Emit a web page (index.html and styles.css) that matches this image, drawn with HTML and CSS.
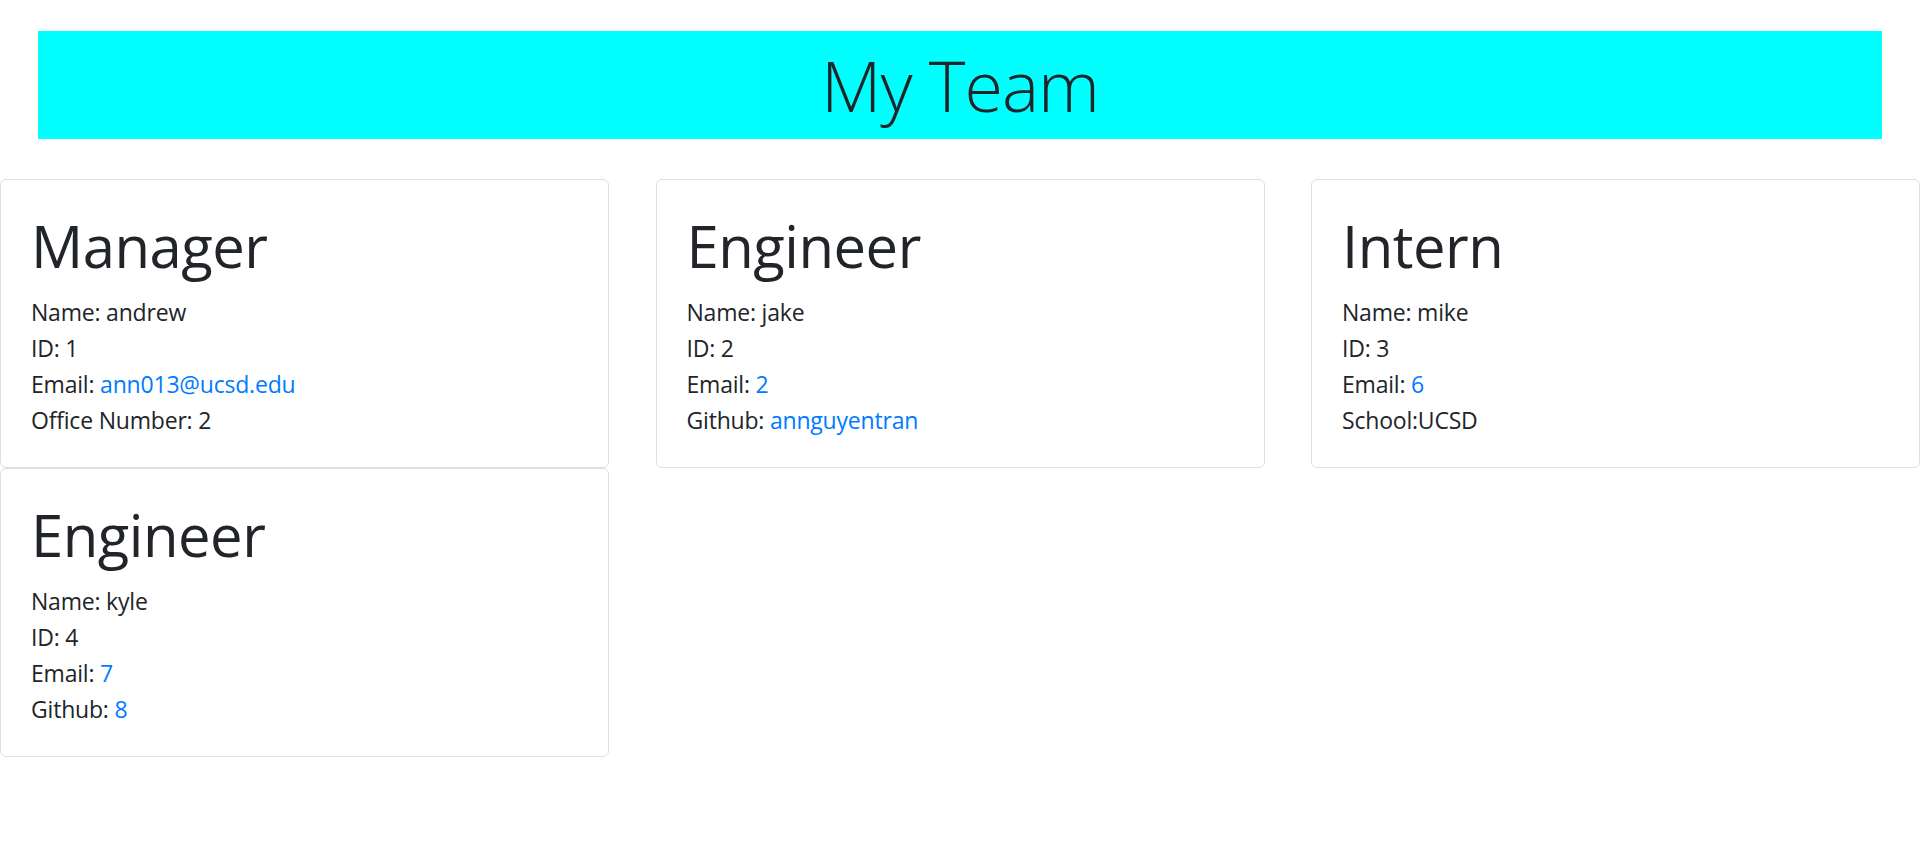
FILE: index.html
```html
<!DOCTYPE html>
<html lang="en">
<head>
<meta charset="utf-8">
<title>My Team</title>
<link rel="stylesheet" href="styles.css">
</head>
<body>
<header class="jumbotron">
  <h1 class="jumbotron-title">My Team</h1>
</header>
<main class="team">
  <section class="card">
    <div class="card-body">
      <h2 class="card-title">Manager</h2>
      <p class="card-line">Name: andrew</p>
      <p class="card-line">ID: 1</p>
      <p class="card-line">Email: <a class="card-link" href="mailto:ann013@ucsd.edu">ann013@ucsd.edu</a></p>
      <p class="card-line">Office Number: 2</p>
    </div>
  </section>
  <section class="card">
    <div class="card-body">
      <h2 class="card-title">Engineer</h2>
      <p class="card-line">Name: jake</p>
      <p class="card-line">ID: 2</p>
      <p class="card-line">Email: <a class="card-link" href="mailto:2">2</a></p>
      <p class="card-line">Github: <a class="card-link" href="#">annguyentran</a></p>
    </div>
  </section>
  <section class="card">
    <div class="card-body">
      <h2 class="card-title">Intern</h2>
      <p class="card-line">Name: mike</p>
      <p class="card-line">ID: 3</p>
      <p class="card-line">Email: <a class="card-link" href="mailto:6">6</a></p>
      <p class="card-line">School:UCSD</p>
    </div>
  </section>
  <section class="card">
    <div class="card-body">
      <h2 class="card-title">Engineer</h2>
      <p class="card-line">Name: kyle</p>
      <p class="card-line">ID: 4</p>
      <p class="card-line">Email: <a class="card-link" href="mailto:7">7</a></p>
      <p class="card-line">Github: <a class="card-link" href="#">8</a></p>
    </div>
  </section>
</main>
</body>
</html>
```
FILE: styles.css
```css
* {
  box-sizing: border-box;
}

body {
  margin: 0;
  font-family: "Open Sans", "Noto Sans", "Liberation Sans", sans-serif;
  color: #212529;
  background: #ffffff;
  font-size: 24px;
  line-height: 36px;
}

.jumbotron {
  margin: 31px 38px 40px;
  height: 108px;
  background: #00ffff;
  display: flex;
  align-items: center;
  justify-content: center;
}

.jumbotron-title {
  margin: 0;
  font-size: 70px;
  font-weight: 300;
  line-height: 86px;
  letter-spacing: -1px;
  color: #212529;
}

.team {
  display: grid;
  grid-template-columns: repeat(3, 609px);
  justify-content: space-between;
  align-items: start;
}

.card {
  border: 1px solid #dfdfdf;
  border-radius: 6px;
  background: #ffffff;
}

.card-body {
  padding: 30px 30px 29px;
}

.card-title {
  margin: 0 0 12px;
  font-size: 58px;
  font-weight: 400;
  line-height: 72px;
  letter-spacing: -0.5px;
}

.card-line {
  margin: 0;
  font-size: 23px;
  line-height: 36px;
  letter-spacing: -0.2px;
}

.card-link {
  color: #007bff;
  text-decoration: none;
}
```
